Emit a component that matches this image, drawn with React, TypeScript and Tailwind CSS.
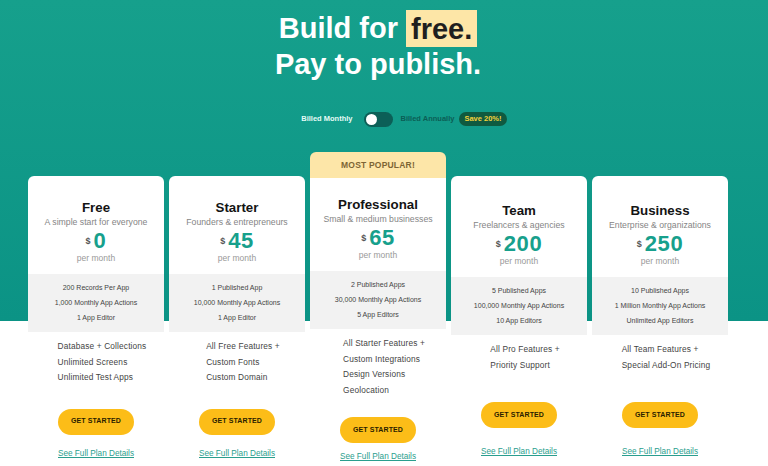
import React from 'react'

interface Plan {
  name: string
  sub: string
  price: string
  limits: string[]
  features: string[]
  popular?: boolean
  pt: string
  btnMt: string
  linkMt: string
}

const plans: Plan[] = [
  {
    name: 'Free',
    sub: 'A simple start for everyone',
    price: '0',
    limits: ['200 Records Per App', '1,000 Monthly App Actions', '1 App Editor'],
    features: ['Database + Collections', 'Unlimited Screens', 'Unlimited Test Apps'],
    pt: 'pt-[24px]',
    btnMt: 'mt-[23px]',
    linkMt: 'mt-[13px]',
  },
  {
    name: 'Starter',
    sub: 'Founders & entrepreneurs',
    price: '45',
    limits: ['1 Published App', '10,000 Monthly App Actions', '1 App Editor'],
    features: ['All Free Features +', 'Custom Fonts', 'Custom Domain'],
    pt: 'pt-[24px]',
    btnMt: 'mt-[23px]',
    linkMt: 'mt-[13px]',
  },
  {
    name: 'Professional',
    sub: 'Small & medium businesses',
    price: '65',
    limits: ['2 Published Apps', '30,000 Monthly App Actions', '5 App Editors'],
    features: ['All Starter Features +', 'Custom Integrations', 'Design Versions', 'Geolocation'],
    popular: true,
    pt: 'pt-[19px]',
    btnMt: 'mt-[19px]',
    linkMt: 'mt-[8px]',
  },
  {
    name: 'Team',
    sub: 'Freelancers & agencies',
    price: '200',
    limits: ['5 Published Apps', '100,000 Monthly App Actions', '10 App Editors'],
    features: ['All Pro Features +', 'Priority Support'],
    pt: 'pt-[27px]',
    btnMt: 'mt-[29px]',
    linkMt: 'mt-[18px]',
  },
  {
    name: 'Business',
    sub: 'Enterprise & organizations',
    price: '250',
    limits: ['10 Published Apps', '1 Million Monthly App Actions', 'Unlimited App Editors'],
    features: ['All Team Features +', 'Special Add-On Pricing'],
    pt: 'pt-[27px]',
    btnMt: 'mt-[29px]',
    linkMt: 'mt-[18px]',
  },
]

function PlanCard({ plan }: { plan: Plan }) {
  return (
    <div className={`w-[136px] flex flex-col ${plan.popular ? '' : 'mt-[24px]'}`}>
      {plan.popular && (
        <div className="h-[26px] rounded-t-[6px] bg-[#fde6a8] flex items-center justify-center text-[8.5px] font-bold text-[#7d6534] tracking-[0.2px]">
          MOST POPULAR!
        </div>
      )}
      <div className={`bg-white h-[320px] flex flex-col items-center ${plan.popular ? '' : 'rounded-t-[6px]'} ${plan.pt}`}>
        <h2 className="text-[13.3px] leading-[16px] font-bold text-[#141414]">{plan.name}</h2>
        <p className="text-[8.7px] leading-[12px] text-[#858585]">{plan.sub}</p>
        <div className="mt-[1px] h-[24px] flex items-center gap-[3px]">
          <span className="text-[9px] leading-[10px] font-bold text-[#555]">$</span>
          <span className="text-[22px] leading-[24px] font-bold text-[#17a08c] tracking-[0.6px]">{plan.price}</span>
        </div>
        <p className="text-[8.5px] leading-[11px] text-[#999]">per month</p>
        <div className="mt-[10px] w-full bg-[#f2f2f2] pt-[6px] pb-[7px] text-center">
          {plan.limits.map((l) => (
            <p key={l} className="text-[7px] leading-[15px] text-[#444]">
              {l}
            </p>
          ))}
        </div>
        <ul className="mt-[7px] pl-3 text-left">
          {plan.features.map((f) => (
            <li key={f} className="text-[8.3px] leading-[15.5px] text-[#444] tracking-[0.15px]">
              {f}
            </li>
          ))}
        </ul>
        <button
          className={`${plan.btnMt} w-[76px] h-[26px] rounded-full bg-[#fcbd18] text-[7px] font-bold text-[#2a1d00] tracking-[0.1px]`}
        >
          GET STARTED
        </button>
        <a href="#" className={`${plan.linkMt} text-[8.2px] leading-[12px] text-[#2a9e8e] underline`}>
          See Full Plan Details
        </a>
      </div>
    </div>
  )
}

export default function App() {
  return (
    <div
      className="w-[768px] h-[466px] overflow-hidden bg-[linear-gradient(180deg,#16a08c_0px,#0b9385_321px,#ffffff_321px)]"
      style={{ fontFamily: '"Liberation Sans", Arial, sans-serif' }}
    >
      <div className="w-[756px] flex flex-col items-center">
        <h1 className="pt-[10px] text-center text-[29px] leading-[36px] font-bold text-white">
          Build for{' '}
          <span className="bg-[#fde6a7] text-[#1f1f1f] px-[5px] py-[2.5px]">free.</span>
          <br />
          Pay to publish.
        </h1>

        <div className="mt-[29px] w-full grid grid-cols-[1fr_auto_1fr] items-center h-[16px]">
          <div className="flex justify-end pr-[11px]">
            <span className="text-[7.5px] font-bold text-[#e6fbf6]">Billed Monthly</span>
          </div>
          <div className="w-[29px] h-[15px] rounded-full bg-[#0c5f57] flex items-center px-[2px]">
            <span className="w-[11px] h-[11px] rounded-full bg-white" />
          </div>
          <div className="flex items-center pl-[8px] gap-[5px]">
            <span className="text-[7.5px] font-bold text-[#0b5e55]">Billed Annually</span>
            <span className="h-[14px] px-[5px] rounded-full bg-[#0f5a40] text-[7.5px] font-bold text-[#f3d23b] flex items-center">
              Save 20%!
            </span>
          </div>
        </div>

        <div className="mt-[25px] flex items-start gap-[5px]">
          {plans.map((p) => (
            <PlanCard key={p.name} plan={p} />
          ))}
        </div>
      </div>
    </div>
  )
}
